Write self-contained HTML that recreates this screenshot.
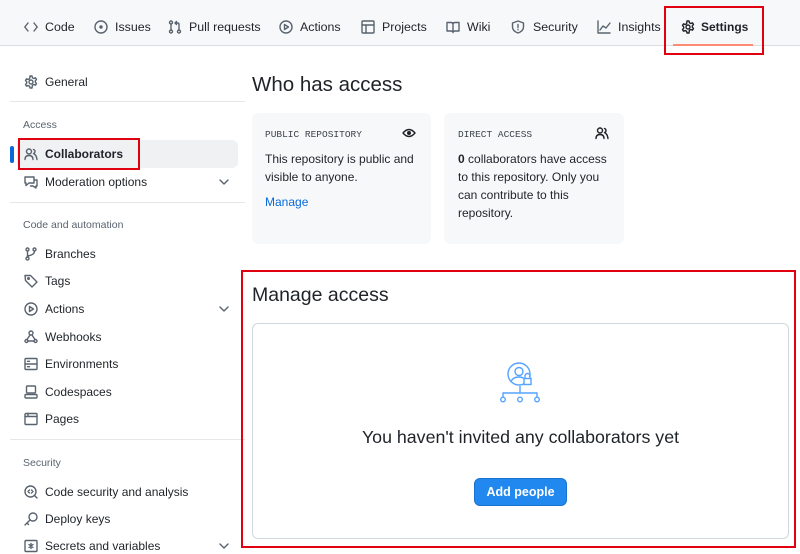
<!DOCTYPE html>
<html><head><meta charset="utf-8"><style>
*{margin:0;padding:0;box-sizing:border-box}
body{width:800px;height:550px;overflow:hidden;background:#fff;font-family:"Liberation Sans",sans-serif;color:#1f2328;position:relative;font-size:13px}
.a{position:absolute;white-space:nowrap}
.nav{position:absolute;left:0;top:0;width:800px;height:46px;background:#f6f8fa;border-bottom:1px solid #d8dee4}
.ni{position:absolute;top:19px;font-size:12.4px;line-height:16px}
svg.i{position:absolute;width:14px;height:14px;fill:none;stroke:#59636e;stroke-width:1.4;stroke-linecap:round;stroke-linejoin:round}
.si{position:absolute;left:45px;font-size:12px;line-height:16px}
.lab{position:absolute;left:23px;font-size:10.5px;color:#59636e}
.hr{position:absolute;left:10px;width:235px;height:1px;background:#e5e8eb}
.card{position:absolute;top:113px;height:131px;background:#f6f8fa;border-radius:6px}
.mono{position:absolute;top:129px;font-family:"Liberation Mono",monospace;font-size:9.5px;color:#3d444d}
.ct{position:absolute;top:150px;font-size:12px;line-height:18px;color:#1f2328}
.red{position:absolute;border:2px solid #e0000f}
</style></head><body>
<div class="nav"></div>
<svg class="i" style="left:24px;top:20px" viewBox="0 0 14 14"><path d="M4 3L0.8 7 4 11M10 3l3.2 4L10 11"/></svg><div class="ni" style="left:45px">Code</div>
<svg class="i" style="left:94px;top:20px" viewBox="0 0 14 14"><circle cx="7" cy="7" r="6"/><circle cx="7" cy="7" r="1" fill="#59636e"/></svg><div class="ni" style="left:115px">Issues</div>
<svg class="i" style="left:168px;top:20px" viewBox="0 0 14 14"><circle cx="3" cy="2.5" r="1.5"/><circle cx="3" cy="11.5" r="1.5"/><circle cx="11" cy="11.5" r="1.5"/><path d="M3 4v6M11 10V4.5Q11 3 9.5 3H7M8.5 1.5L7 3l1.5 1.5"/></svg><div class="ni" style="left:189px">Pull requests</div>
<svg class="i" style="left:279px;top:20px" viewBox="0 0 14 14"><circle cx="7" cy="7" r="6"/><path d="M5.5 4.5v5l4-2.5z"/></svg><div class="ni" style="left:300px">Actions</div>
<svg class="i" style="left:361px;top:20px" viewBox="0 0 14 14"><rect x="1" y="1" width="12" height="12" rx="1"/><path d="M1 5h12M5 5v8"/></svg><div class="ni" style="left:382px">Projects</div>
<svg class="i" style="left:446px;top:20px" viewBox="0 0 14 14"><path d="M1 2.5h4Q7 2.5 7 4.5v8Q7 11 5 11H1zM13 2.5H9Q7 2.5 7 4.5v8Q7 11 9 11h4z"/></svg><div class="ni" style="left:467px">Wiki</div>
<svg class="i" style="left:511px;top:20px" viewBox="0 0 14 14"><path d="M7 1l5.5 2v4Q12.5 11 7 13Q1.5 11 1.5 7V3z"/><path d="M7 4.5v3M7 9.5v.3"/></svg><div class="ni" style="left:533px">Security</div>
<svg class="i" style="left:597px;top:20px" viewBox="0 0 14 14"><path d="M1 1v12h12M3 10l3-4 3 2 4-5"/></svg><div class="ni" style="left:618px">Insights</div>
<svg class="i" style="left:681px;top:20px;stroke:#1f2328" viewBox="0 0 14 14"><circle cx="7" cy="7" r="2"/><path d="M6 1h2l.4 1.7 1.5.8 1.6-.7 1 1.7-1.2 1.3v1.4l1.2 1.3-1 1.7-1.6-.7-1.5.8L8 13H6l-.4-1.7-1.5-.8-1.6.7-1-1.7 1.2-1.3V6.8L1.5 5.5l1-1.7 1.6.7 1.5-.8z"/></svg><div class="ni" style="left:701px;font-weight:bold;font-size:12px">Settings</div>
<div class="a" style="left:673px;top:44px;width:80px;height:2px;background:#fd8c73"></div>
<div class="red" style="left:664px;top:6px;width:100px;height:49px"></div>

<svg class="i" style="left:24px;top:75px" viewBox="0 0 14 14"><circle cx="7" cy="7" r="2"/><path d="M6 1h2l.4 1.7 1.5.8 1.6-.7 1 1.7-1.2 1.3v1.4l1.2 1.3-1 1.7-1.6-.7-1.5.8L8 13H6l-.4-1.7-1.5-.8-1.6.7-1-1.7 1.2-1.3V6.8L1.5 5.5l1-1.7 1.6.7 1.5-.8z"/></svg><div class="si" style="top:74px">General</div>
<div class="hr" style="top:101px"></div>
<div class="lab" style="top:119px">Access</div>
<div class="a" style="left:17px;top:140px;width:221px;height:28px;background:#eff1f3;border-radius:6px"></div>
<div class="a" style="left:10px;top:146px;width:4px;height:17px;background:#0969da;border-radius:2px"></div>
<svg class="i" style="left:24px;top:147px" viewBox="0 0 14 14"><circle cx="5" cy="4.5" r="2.5"/><path d="M1 12.5Q1 8.5 5 8.5T9 12.5M9.5 2.5Q11 3 11 4.5T9.5 6.5Q12.5 8 13 12.5"/></svg><div class="si" style="top:146px;font-weight:bold">Collaborators</div>
<div class="red" style="left:18px;top:138px;width:122px;height:32px"></div>
<svg class="i" style="left:24px;top:175px" viewBox="0 0 14 14"><path d="M1 2h9v6H5l-3 2.5V8H1zM11 5h2v6h-1v2l-3-2H6.5"/></svg><div class="si" style="top:174px">Moderation options</div>
<svg class="i" style="left:217px;top:175px" viewBox="0 0 14 14"><path d="M3 5l4 4 4-4"/></svg>
<div class="hr" style="top:202px"></div>
<div class="lab" style="top:219px">Code and automation</div>
<svg class="i" style="left:24px;top:247px" viewBox="0 0 14 14"><circle cx="3.5" cy="2.5" r="1.5"/><circle cx="10.5" cy="2.5" r="1.5"/><circle cx="3.5" cy="11.5" r="1.5"/><path d="M3.5 4v6M10.5 4Q10.5 8 3.5 9"/></svg><div class="si" style="top:246px">Branches</div>
<svg class="i" style="left:24px;top:274px" viewBox="0 0 14 14"><path d="M1 1.5h5.5l6.5 6.5-5 5L1.5 6.5z"/><circle cx="4.5" cy="4.5" r=".8"/></svg><div class="si" style="top:273px">Tags</div>
<svg class="i" style="left:24px;top:302px" viewBox="0 0 14 14"><circle cx="7" cy="7" r="6"/><path d="M5.5 4.5v5l4-2.5z"/></svg><div class="si" style="top:301px">Actions</div>
<svg class="i" style="left:217px;top:302px" viewBox="0 0 14 14"><path d="M3 5l4 4 4-4"/></svg>
<svg class="i" style="left:24px;top:330px" viewBox="0 0 14 14"><circle cx="7" cy="3" r="2"/><circle cx="2.5" cy="11" r="1.5"/><circle cx="11.5" cy="11" r="1.5"/><path d="M6 5l-3 4.5M8 5l3 4.5M4 11h6"/></svg><div class="si" style="top:329px">Webhooks</div>
<svg class="i" style="left:24px;top:357px" viewBox="0 0 14 14"><rect x="1" y="1.5" width="12" height="11" rx="1"/><path d="M1 7h12M3.5 4.3h2M3.5 9.7h2"/></svg><div class="si" style="top:356px">Environments</div>
<svg class="i" style="left:24px;top:385px" viewBox="0 0 14 14"><rect x="2.5" y="1" width="9" height="7" rx="1"/><rect x="1" y="9.5" width="12" height="3.5" rx="1"/></svg><div class="si" style="top:384px">Codespaces</div>
<svg class="i" style="left:24px;top:412px" viewBox="0 0 14 14"><rect x="1" y="1.5" width="12" height="11" rx="1"/><path d="M1 4.5h12M4 1.5v3"/></svg><div class="si" style="top:411px">Pages</div>
<div class="hr" style="top:439px"></div>
<div class="lab" style="top:457px">Security</div>
<svg class="i" style="left:24px;top:485px" viewBox="0 0 14 14"><circle cx="6.5" cy="6.5" r="5.5"/><path d="M10.5 10.5L13 13M5.5 5L4 6.5 5.5 8M7.5 5L9 6.5 7.5 8"/></svg><div class="si" style="top:484px">Code security and analysis</div>
<svg class="i" style="left:24px;top:512px" viewBox="0 0 14 14"><circle cx="9" cy="5" r="4"/><path d="M6 8l-5 5M3 11l1.5 1.5"/></svg><div class="si" style="top:511px">Deploy keys</div>
<svg class="i" style="left:24px;top:539px" viewBox="0 0 14 14"><rect x="1" y="1.5" width="12" height="11" rx="1"/><path d="M7 4.5v5M5 5.5l4 3M9 5.5l-4 3"/></svg><div class="si" style="top:538px">Secrets and variables</div>
<svg class="i" style="left:217px;top:539px" viewBox="0 0 14 14"><path d="M3 5l4 4 4-4"/></svg>

<div class="a" style="left:252px;top:73px;font-size:20.5px">Who has access</div>
<div class="card" style="left:252px;width:179px"></div>
<div class="card" style="left:444px;width:180px"></div>
<div class="mono" style="left:265px">PUBLIC REPOSITORY</div>
<svg class="i" style="left:402px;top:126px;stroke:#1f2328" viewBox="0 0 14 14"><path d="M1 7Q7 0 13 7Q7 14 1 7z"/><circle cx="7" cy="7" r="1.3" fill="#1f2328"/></svg>
<div class="ct" style="left:265px">This repository is public and<br>visible to anyone.</div>
<div class="a" style="left:265px;top:195px;font-size:12px;color:#0969da">Manage</div>
<div class="mono" style="left:458px">DIRECT ACCESS</div>
<svg class="i" style="left:595px;top:126px;stroke:#1f2328" viewBox="0 0 14 14"><circle cx="5" cy="4.5" r="2.5"/><path d="M1 12.5Q1 8.5 5 8.5T9 12.5M9.5 2.5Q11 3 11 4.5T9.5 6.5Q12.5 8 13 12.5"/></svg>
<div class="ct" style="left:458px"><b>0</b> collaborators have access<br>to this repository. Only you<br>can contribute to this<br>repository.</div>

<div class="a" style="left:252px;top:284px;font-size:19.5px">Manage access</div>
<div class="a" style="left:252px;top:323px;width:537px;height:216px;border:1px solid #d0d7de;border-radius:6px"></div>
<svg class="a" style="left:495px;top:360px" width="50" height="45" viewBox="0 0 50 45" fill="none" stroke="#54a3ff" stroke-width="1.4"><circle cx="24" cy="14" r="11"/><circle cx="24" cy="11.5" r="4"/><path d="M16 21.5Q18 17 24 17Q27 17 29 18.5"/><rect x="28.5" y="17" width="8" height="7" fill="#fff" stroke="none"/><path d="M30 18.5v-2.5a2.5 2.5 0 0 1 5 0v2.5"/><rect x="29" y="18.5" width="7" height="6"/><path d="M25 26v7M8 37v-4h34v4"/><circle cx="8" cy="39.5" r="2.3"/><circle cx="25" cy="39.5" r="2.3"/><circle cx="42" cy="39.5" r="2.3"/></svg>
<div class="a" style="left:252px;width:537px;top:427px;text-align:center;font-size:17.8px">You haven't invited any collaborators yet</div>
<div class="a" style="left:474px;top:478px;width:93px;height:28px;background:#2188f0;border:1px solid #1a73d0;border-radius:6px;color:#fff;font-weight:bold;font-size:12.5px;text-align:center;line-height:26px">Add people</div>
<div class="red" style="left:241px;top:270px;width:555px;height:278px"></div>
</body></html>
